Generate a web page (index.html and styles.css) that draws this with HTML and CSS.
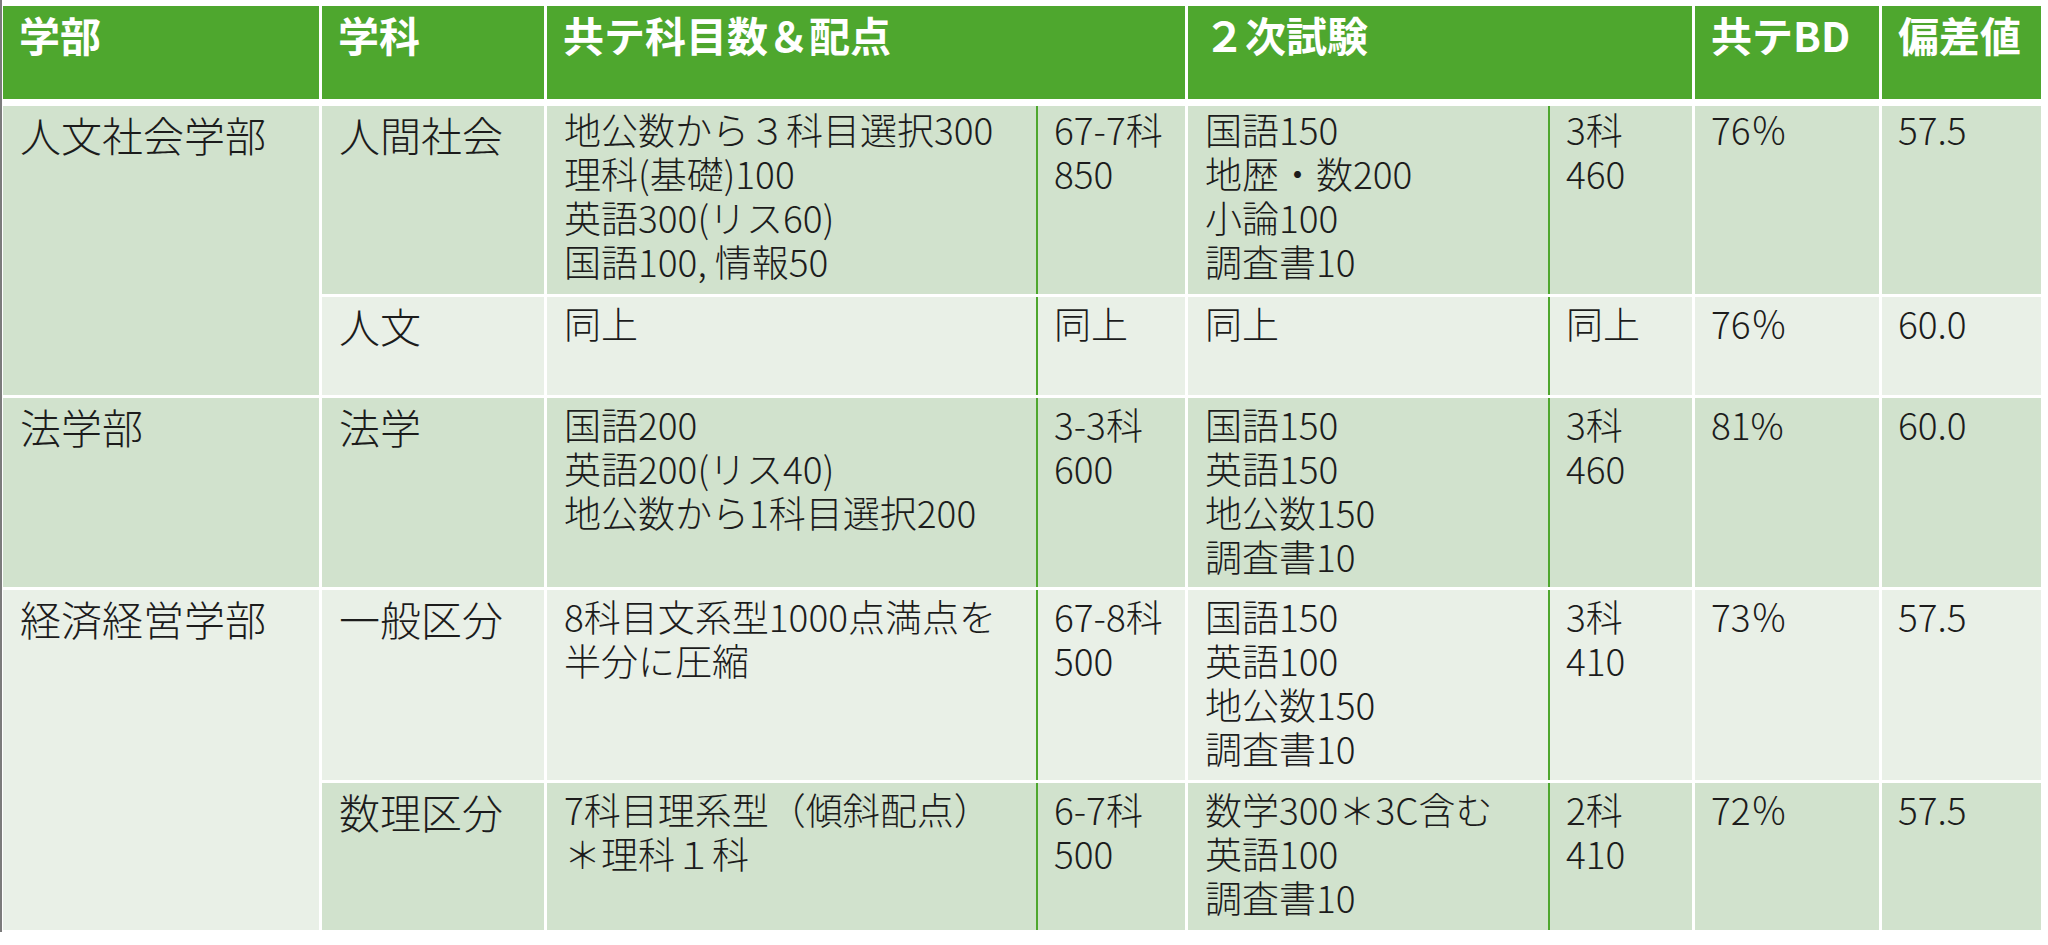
FILE: index.html
```html
<!DOCTYPE html>
<html lang="ja">
<head>
<meta charset="utf-8">
<title>入試配点表</title>
<link rel="stylesheet" href="styles.css">
</head>
<body>
<div class="sheet">
  <div class="table">
    <div class="th">学部</div>
    <div class="th">学科</div>
    <div class="th">共テ科目数＆配点</div>
    <div class="th th-wide">２次試験</div>
    <div class="th">共テBD</div>
    <div class="th">偏差値</div>

    <div class="td big dark span2">人文社会学部</div>
    <div class="td big dark">人間社会</div>
    <div class="td split s3 dark r1"><div class="main">地公数から３科目選択300<br>理科(基礎)100<br>英語300(リス60)<br>国語100, 情報50</div><div class="sub">67-7科<br>850</div></div>
    <div class="td split s4 dark r1"><div class="main">国語150<br>地歴・数200<br>小論100<br>調査書10</div><div class="sub">3科<br>460</div></div>
    <div class="td small dark r1">76％</div>
    <div class="td small dark r1">57.5</div>

    <div class="td big light">人文</div>
    <div class="td split s3 light"><div class="main">同上</div><div class="sub">同上</div></div>
    <div class="td split s4 light"><div class="main">同上</div><div class="sub">同上</div></div>
    <div class="td small light">76％</div>
    <div class="td small light">60.0</div>

    <div class="td big dark">法学部</div>
    <div class="td big dark">法学</div>
    <div class="td split s3 dark"><div class="main">国語200<br>英語200(リス40)<br>地公数から1科目選択200</div><div class="sub">3-3科<br>600</div></div>
    <div class="td split s4 dark"><div class="main">国語150<br>英語150<br>地公数150<br>調査書10</div><div class="sub">3科<br>460</div></div>
    <div class="td small dark">81%</div>
    <div class="td small dark">60.0</div>

    <div class="td big light span2">経済経営学部</div>
    <div class="td big light">一般区分</div>
    <div class="td split s3 light"><div class="main">8科目文系型1000点満点を<br>半分に圧縮</div><div class="sub">67-8科<br>500</div></div>
    <div class="td split s4 light"><div class="main">国語150<br>英語100<br>地公数150<br>調査書10</div><div class="sub">3科<br>410</div></div>
    <div class="td small light">73％</div>
    <div class="td small light">57.5</div>

    <div class="td big dark">数理区分</div>
    <div class="td split s3 dark"><div class="main">7科目理系型（傾斜配点）<br>＊理科１科</div><div class="sub">6-7科<br>500</div></div>
    <div class="td split s4 dark"><div class="main">数学300＊3C含む<br>英語100<br>調査書10</div><div class="sub">2科<br>410</div></div>
    <div class="td small dark">72％</div>
    <div class="td small dark">57.5</div>
  </div>
</div>
</body>
</html>
```

FILE: styles.css
```css
html, body {
  margin: 0;
  padding: 0;
  background: #ffffff;
}

body {
  font-family: "Noto Sans CJK JP", "Noto Sans", sans-serif;
  color: #1c1c1c;
}

.sheet {
  width: 2046px;
  padding: 6px 0 2px 1px;
  border-left: 2px solid #7b7b7b;
}

.table {
  display: grid;
  grid-template-columns: 316px 222px 638px 504px 184px 159px;
  grid-template-rows: 97px 188px 98px 189px 190px 147px;
  column-gap: 3px;
  row-gap: 3px;
}

.th {
  background: #4ea72e;
  color: #ffffff;
  font-weight: 700;
  font-size: 41px;
  line-height: 44px;
  padding: 6px 0 0 16px;
  margin-bottom: 4px;
  white-space: nowrap;
}

.td {
  font-weight: 300;
  white-space: nowrap;
}

.dark { background: #d1e2cd; }
.light { background: #e9f0e7; }

.span2 { grid-row: span 2; }

.big {
  font-size: 41px;
  line-height: 44px;
  padding: 6px 0 0 17px;
}

.small {
  font-size: 37px;
  line-height: 44px;
  padding: 4px 0 0 16px;
}

.split {
  display: grid;
  font-size: 37px;
  line-height: 44px;
}

.s3 { grid-template-columns: 489px 147px; }
.s4 { grid-template-columns: 360px 142px; }

.split .main {
  padding: 4px 0 0 17px;
}

.split .sub {
  border-left: 2px solid #4ea72e;
  padding: 4px 0 0 16px;
}

.small.r1,
.r1 .main,
.r1 .sub {
  padding-top: 1px;
}
```
